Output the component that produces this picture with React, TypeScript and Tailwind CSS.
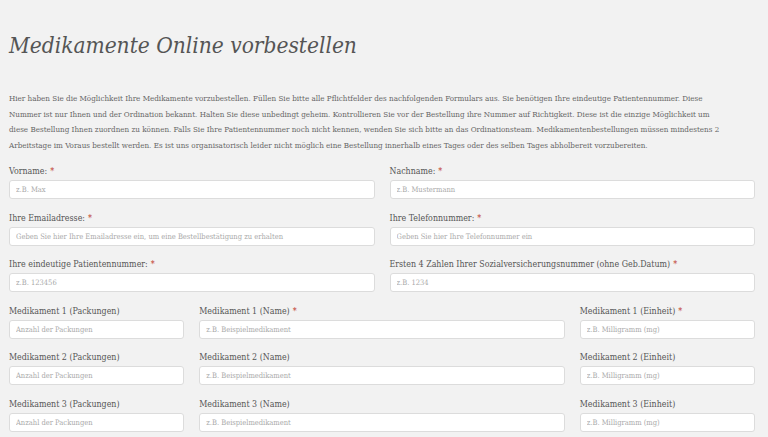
import React from 'react'

const serif = { fontFamily: '"DejaVu Serif Condensed", "DejaVu Serif", "Liberation Serif", serif' }

const Field = ({
  label,
  placeholder,
  required,
}: {
  label: string
  placeholder: string
  required?: boolean
}) => (
  <div className="flex flex-col">
    <label className="text-[8.8px] leading-[12px] text-[#555] mb-[3px] whitespace-nowrap">
      {label}
      {required && <span className="text-[#c0392b] ml-[3px]">*</span>}
    </label>
    <input
      type="text"
      placeholder={placeholder}
      className="h-[19px] w-full rounded-[3px] border border-[#dcdcdc] bg-white px-[6px] text-[7.5px] text-[#555] placeholder:text-[#aaa] outline-none"
      style={serif}
    />
  </div>
)

export default function App() {
  const meds = [1, 2, 3]

  return (
    <div className="min-h-screen w-full bg-[#f2f2f2] pl-[9px] pr-[13px] pt-[29px]" style={serif}>
      <h1 className="text-[22.5px] leading-[32px] italic font-normal text-[#555]">
        Medikamente Online vorbestellen
      </h1>

      <p className="mt-[30px] text-[8px] leading-[15.5px] text-[#666]">
        Hier haben Sie die Möglichkeit Ihre Medikamente vorzubestellen. Füllen Sie bitte alle Pflichtfelder des
        nachfolgenden Formulars aus. Sie benötigen Ihre eindeutige Patientennummer. Diese
        <br />
        Nummer ist nur Ihnen und der Ordination bekannt. Halten Sie diese unbedingt geheim. Kontrollieren Sie vor der
        Bestellung ihre Nummer auf Richtigkeit. Diese ist die einzige Möglichkeit um
        <br />
        diese Bestellung Ihnen zuordnen zu können. Falls Sie Ihre Patientennummer noch nicht kennen, wenden Sie sich
        bitte an das Ordinationsteam. Medikamentenbestellungen müssen mindestens 2
        <br />
        Arbeitstage im Voraus bestellt werden. Es ist uns organisatorisch leider nicht möglich eine Bestellung innerhalb
        eines Tages oder des selben Tages abholbereit vorzubereiten.
      </p>

      <form className="mt-[12px] grid grid-cols-12 gap-x-[15px] gap-y-[12.5px]">
        <div className="col-span-6">
          <Field label="Vorname:" placeholder="z.B. Max" required />
        </div>
        <div className="col-span-6">
          <Field label="Nachname:" placeholder="z.B. Mustermann" required />
        </div>
        <div className="col-span-6">
          <Field
            label="Ihre Emailadresse:"
            placeholder="Geben Sie hier Ihre Emailadresse ein, um eine Bestellbestätigung zu erhalten"
            required
          />
        </div>
        <div className="col-span-6">
          <Field label="Ihre Telefonnummer:" placeholder="Geben Sie hier Ihre Telefonnummer ein" required />
        </div>
        <div className="col-span-6">
          <Field label="Ihre eindeutige Patientennummer:" placeholder="z.B. 123456" required />
        </div>
        <div className="col-span-6">
          <Field
            label="Ersten 4 Zahlen Ihrer Sozialversicherungsnummer (ohne Geb.Datum)"
            placeholder="z.B. 1234"
            required
          />
        </div>
        {meds.map((n) => (
          <React.Fragment key={n}>
            <div className="col-span-3">
              <Field label={`Medikament ${n} (Packungen)`} placeholder="Anzahl der Packungen" />
            </div>
            <div className="col-span-6">
              <Field label={`Medikament ${n} (Name)`} placeholder="z.B. Beispielmedikament" required={n === 1} />
            </div>
            <div className="col-span-3">
              <Field label={`Medikament ${n} (Einheit)`} placeholder="z.B. Milligramm (mg)" required={n === 1} />
            </div>
          </React.Fragment>
        ))}
      </form>
    </div>
  )
}
